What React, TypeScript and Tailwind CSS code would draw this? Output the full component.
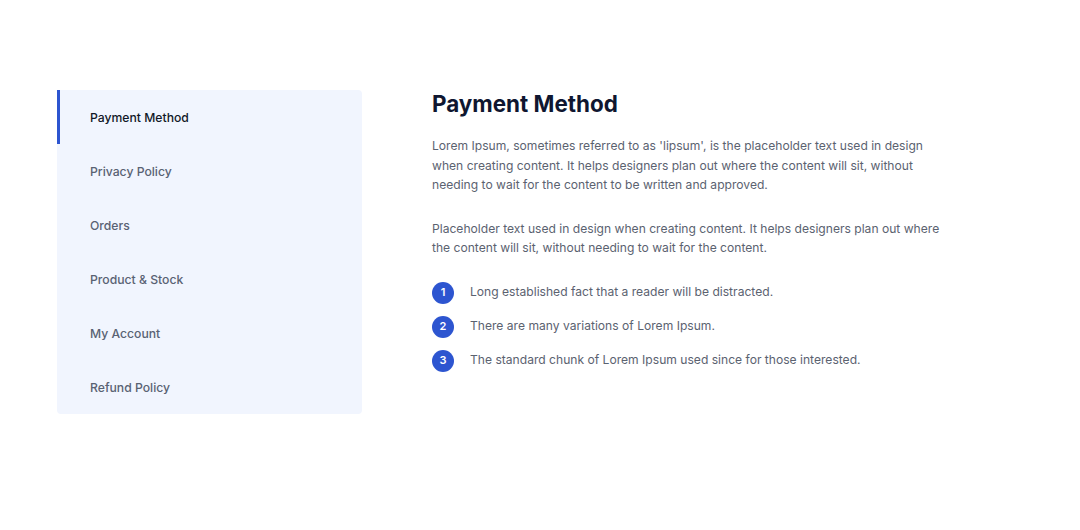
import React from "react";

const items = ["Payment Method", "Privacy Policy", "Orders", "Product & Stock", "My Account", "Refund Policy"];
const list = [
  "Long established fact that a reader will be distracted.",
  "There are many variations of Lorem Ipsum.",
  "The standard chunk of Lorem Ipsum used since for those interested.",
];

export default function App() {
  return (
    <div className="w-[1080px] h-[530px] bg-white flex pt-[90px] pl-[57px]" style={{ fontFamily: "Inter, 'Noto Sans', sans-serif" }}>
      <div className="w-[305px] h-[324px] bg-[#f1f5fe] rounded-sm flex flex-col">
        {items.map((it, i) => (
          <div
            key={it}
            className={
              "h-[54px] flex items-center pt-[2px] text-[12.2px] font-medium " +
              (i === 0 ? "border-l-[3px] border-[#2d55d0] pl-[30px] text-[#111827]" : "pl-[33px] text-[#596273]")
            }
          >
            {it}
          </div>
        ))}
      </div>
      <div className="ml-[70px] w-[512px]">
        <h1 className="text-[22.4px] leading-[28px] font-bold text-[#0f1630] mt-[0px]">Payment Method</h1>
        <p className="mt-[18px] text-[12.1px] leading-[19.5px] text-[#5b6270]">
          Lorem Ipsum, sometimes referred to as 'lipsum', is the placeholder text used in design when creating content. It helps designers plan out where the content will sit, without needing to wait for the content to be written and approved.
        </p>
        <p className="mt-[24px] text-[12.1px] leading-[19.5px] text-[#5b6270]">
          Placeholder text used in design when creating content. It helps designers plan out where the content will sit, without needing to wait for the content.
        </p>
        <div className="mt-[24px] flex flex-col gap-[12px]">
          {list.map((t, i) => (
            <div key={i} className="flex items-center">
              <div className="w-[22px] h-[22px] rounded-full bg-[#2d55d0] text-white text-[11px] font-semibold flex items-center justify-center">
                {i + 1}
              </div>
              <span className="ml-[16px] text-[12.1px] text-[#5b6270]">{t}</span>
            </div>
          ))}
        </div>
      </div>
    </div>
  );
}
